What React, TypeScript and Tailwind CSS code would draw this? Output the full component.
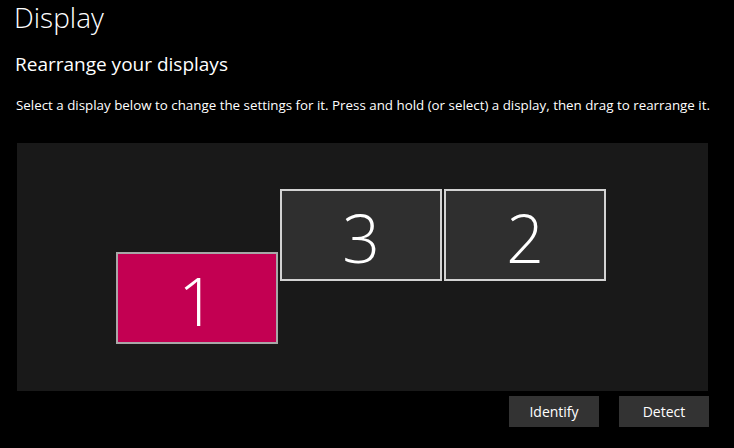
import React from 'react';

/** Display arrangement canvas tiles (position on the canvas is the content) */
const DISPLAYS = [
  { id: '1', left: 99, top: 109, active: true },
  { id: '3', left: 263, top: 46, active: false },
  { id: '2', left: 427, top: 46, active: false },
];

export default function App() {
  return (
    <div
      className="w-[734px] h-[448px] overflow-hidden bg-black text-white"
      style={{ fontFamily: '"Open Sans", "Noto Sans", Arial, sans-serif' }}
    >
      <h1 className="pl-[14px] pt-[1px] text-[28px] font-light leading-[32px]">Display</h1>
      <h2 className="pl-[15px] mt-[19px] text-[19px] leading-[24px]">Rearrange your displays</h2>
      <p className="pl-[16px] mt-[20px] text-[13.35px] leading-[18px] whitespace-nowrap">
        Select a display below to change the settings for it. Press and hold (or select) a display, then drag to rearrange it.
      </p>

      <div className="ml-[17px] mt-[29px] w-[691px] h-[248px] bg-[#191919] relative">
        {DISPLAYS.map((d) => (
          <div
            key={d.id}
            className={
              d.active
                ? 'absolute w-[162px] h-[92px] flex items-center justify-center bg-[#c30052] border-2 border-[#a8a8a8]'
                : 'absolute w-[162px] h-[92px] flex items-center justify-center bg-[#2f2f2f] border-2 border-[#d2d2d2]'
            }
            style={{ left: d.left, top: d.top }}
          >
            <span className="text-[66px] font-light leading-none pt-[4px]">{d.id}</span>
          </div>
        ))}
      </div>

      <div className="ml-[17px] w-[692px] mt-[5px] flex justify-end gap-[20px]">
        <button className="w-[90px] h-[31px] bg-[#333333] text-[14px] text-white">Identify</button>
        <button className="w-[90px] h-[31px] bg-[#333333] text-[14px] text-white">Detect</button>
      </div>
    </div>
  );
}
